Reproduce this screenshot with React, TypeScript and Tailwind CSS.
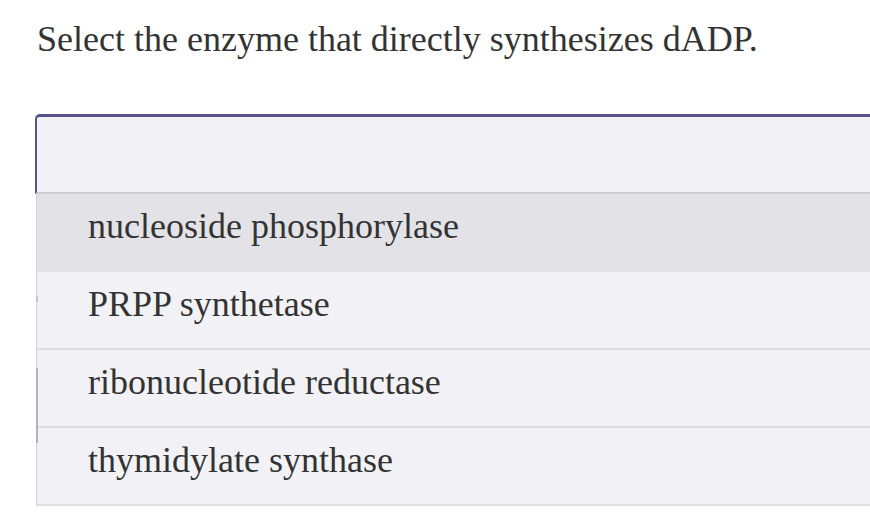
import React from "react";

const options = [
  "nucleoside phosphorylase",
  "PRPP synthetase",
  "ribonucleotide reductase",
  "thymidylate synthase",
];

export default function App() {
  return (
    <div
      className="w-full h-[518px] overflow-hidden bg-white text-[#333333]"
      style={{ fontFamily: '"Liberation Serif", "Times New Roman", serif' }}
    >
      <h1 className="pt-[19px] pl-[37px] text-[36px] leading-[40px] font-normal">
        Select the enzyme that directly synthesizes dADP.
      </h1>
      <div className="relative mt-[55px] ml-[35px] -mr-[40px]">
        <div className="h-[80px] bg-[#f2f2f6] border-t-[3px] border-l-2 border-b-2 border-t-[#55528a] border-l-[#55528a] border-b-[#cfcfd3] rounded-tl-[5px]" />
        <ul className="ml-[1px] border-l border-[#d4d4d8] bg-[#f2f2f6]">
          {options.map((o, i) => (
            <li
              key={o}
              className={`h-[78px] pl-[51px] pt-[12px] text-[36px] leading-[40px] border-b-2 ${
                i === 0 ? "bg-[#e3e3e7] border-[#e3e3e7]" : "border-[#dedee2]"
              } ${i === 3 ? "border-[#d4d4d6]" : ""}`}
            >
              {o}
            </li>
          ))}
        </ul>
        <div className="absolute left-[1px] top-[254px] w-[2px] h-[75px] bg-[#b4b4b8]" />
        <div className="absolute left-[1px] top-[182px] w-[2px] h-[6px] bg-[#c4c4c8]" />
      </div>
    </div>
  );
}
